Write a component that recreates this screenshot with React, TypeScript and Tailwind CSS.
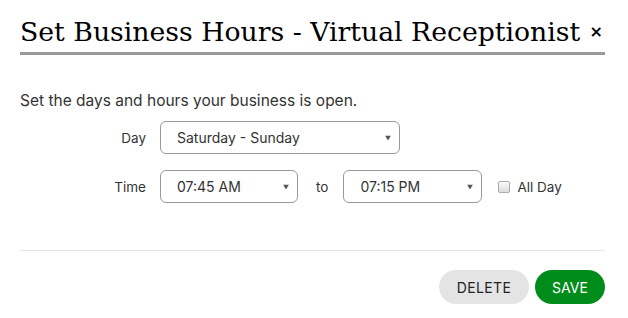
import React, { useState } from 'react';

const Caret = () => (
  <svg width="6" height="5" viewBox="0 0 6 5" className="absolute right-[8px] top-1/2 -translate-y-1/2 pointer-events-none">
    <path d="M0 0 L6 0 L3 5 Z" fill="#555" />
  </svg>
);

type FakeSelectProps = {
  value: string;
  width: string;
};

const FakeSelect = ({ value, width }: FakeSelectProps) => (
  <div className={`relative h-[33px] ${width} rounded-md border border-[#999] bg-white flex items-center pl-4 text-[14px] text-[#333]`}>
    {value}
    <Caret />
  </div>
);

const App = () => {
  const [allDay, setAllDay] = useState(false);

  return (
    <div className="w-[628px] h-[318px] bg-white pl-5 pr-[23px] pt-[15px]" style={{ fontFamily: 'Inter, "Liberation Sans", Arial, sans-serif' }}>
      <div className="flex items-center justify-between">
        <h1 className="whitespace-nowrap text-[26.7px] leading-[34px] text-black" style={{ fontFamily: '"DejaVu Serif", "Liberation Serif", serif' }}>
          Set Business Hours - Virtual Receptionist
        </h1>
        <button className="mr-[2px] shrink-0 text-[16px] font-bold text-black leading-none" style={{ fontFamily: '"DejaVu Sans", sans-serif' }}>×</button>
      </div>
      <div className="mt-[3px] h-[3px] bg-[#999]" />

      <p className="mt-[34px] text-[15.5px] text-[#333]">Set the days and hours your business is open.</p>

      <div className="mt-[9px] flex items-center">
        <span className="w-[126px] text-right text-[13.5px] text-[#333]">Day</span>
        <div className="ml-[14px]">
          <FakeSelect value="Saturday - Sunday" width="w-[240px]" />
        </div>
      </div>

      <div className="mt-[16px] flex items-center">
        <span className="w-[126px] text-right text-[13.5px] text-[#333]">Time</span>
        <div className="ml-[14px]">
          <FakeSelect value="07:45 AM" width="w-[138px]" />
        </div>
        <span className="ml-[18px] text-[13.5px] text-[#333]">to</span>
        <div className="ml-[15px]">
          <FakeSelect value="07:15 PM" width="w-[139px]" />
        </div>
        <label className="ml-[16px] flex items-center gap-[7px] text-[13.5px] text-[#333]">
          <input
            type="checkbox"
            checked={allDay}
            onChange={(e) => setAllDay(e.target.checked)}
            className="w-[12px] h-[12px] appearance-none rounded-[2px] border border-[#aaa] bg-gradient-to-b from-[#fafafa] to-[#ddd]"
          />
          All Day
        </label>
      </div>

      <div className="mt-[47px] h-px bg-[#e5e5e5]" />

      <div className="mt-[19px] flex justify-end gap-[6px]">
        <button className="h-[34px] w-[90px] rounded-full bg-[#e4e4e4] text-[14px] text-[#222] tracking-wide">DELETE</button>
        <button className="h-[34px] w-[70px] rounded-full bg-[#008c1a] text-[14px] text-white">SAVE</button>
      </div>
    </div>
  );
};

export default App;
